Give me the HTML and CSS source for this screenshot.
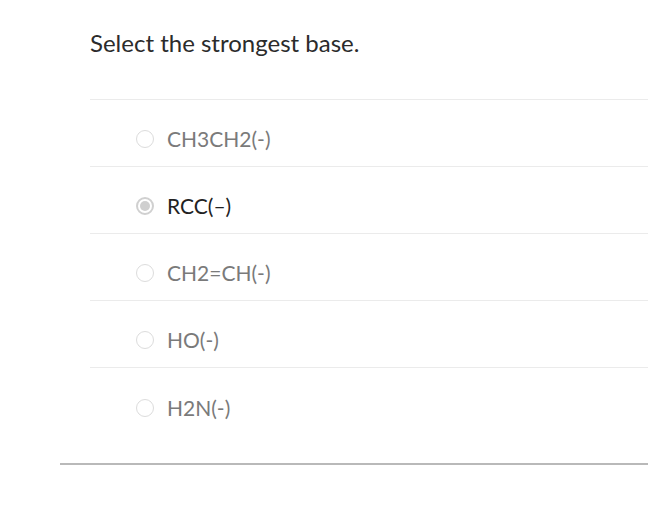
FILE: index.html
```html
<!DOCTYPE html>
<html lang="en">
<head>
<meta charset="utf-8">
<title>Question</title>
<link rel="stylesheet" href="styles.css">
</head>
<body>
<div class="page">
  <div class="question">
    <h1 class="prompt">Select the strongest base.</h1>
    <ul class="answers">
      <li class="answer"><span class="radio"></span><span class="label">CH3CH2(-)</span></li>
      <li class="answer selected"><span class="radio"></span><span class="label">RCC(&#8211;)</span></li>
      <li class="answer"><span class="radio"></span><span class="label">CH2=CH(-)</span></li>
      <li class="answer"><span class="radio"></span><span class="label">HO(-)</span></li>
      <li class="answer"><span class="radio"></span><span class="label">H2N(-)</span></li>
    </ul>
  </div>
  <hr class="divider">
</div>
</body>
</html>
```
FILE: styles.css
```css
html, body {
  margin: 0;
  padding: 0;
  background: #fff;
}
body {
  font-family: Lato, "Open Sans", sans-serif;
  overflow: hidden;
}
.page {
  padding-top: 28px;
}
.question {
  padding-left: 90px;
}
.prompt {
  margin: 0;
  font-size: 24px;
  line-height: 30px;
  font-weight: 400;
  color: #2b2b2b;
  height: 71px;
}
.answers {
  list-style: none;
  margin: 0;
  padding: 0;
  border-top: 1px solid #ebebeb;
}
.answer {
  display: flex;
  align-items: center;
  height: 67px;
  box-sizing: border-box;
  padding: 27px 0 15px 46px;
  border-bottom: 1px solid #ebebeb;
}
.answer:last-child {
  border-bottom: none;
}
.radio {
  width: 18px;
  height: 18px;
  box-sizing: border-box;
  border: 1px solid #dcdcdc;
  border-radius: 50%;
  background: #fff;
  margin-right: 13px;
  flex: none;
  position: relative;
}
.selected .radio {
  border: 2px solid #d0d0d0;
}
.selected .radio::after {
  content: "";
  position: absolute;
  left: 2px;
  top: 2px;
  width: 10px;
  height: 10px;
  border-radius: 50%;
  background: #cfcfcf;
}
.label {
  font-size: 21px;
  line-height: 24px;
  color: #7a7a7a;
}
.selected .label {
  color: #222;
}
.divider {
  margin: 28px 0 0 60px;
  border: none;
  height: 2px;
  background: #b9b9b9;
}
```
